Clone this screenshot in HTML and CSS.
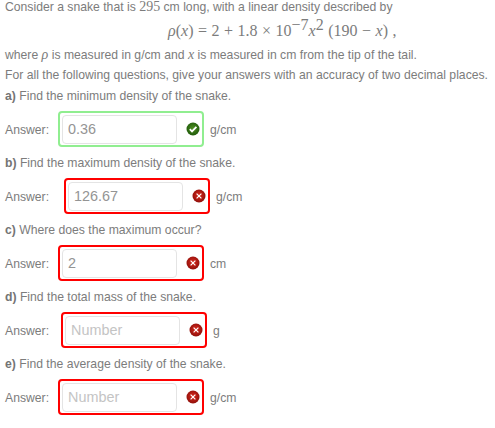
FILE: index.html
```html
<!DOCTYPE html>
<html lang="en">

<head>
    <meta charset="UTF-8">
    <title>Snake density</title>
    <link rel="stylesheet" href="styles.css">
</head>

<body>
    <svg class="defs" width="0" height="0">
        <defs>
            <radialGradient id="greenBall" cx="50%" cy="45%" r="55%">
                <stop offset="0%" stop-color="#4f8f22"></stop>
                <stop offset="100%" stop-color="#1f5a0a"></stop>
            </radialGradient>
            <radialGradient id="redBall" cx="50%" cy="45%" r="55%">
                <stop offset="0%" stop-color="#dc2a1e"></stop>
                <stop offset="100%" stop-color="#8f0f0a"></stop>
            </radialGradient>
        </defs>
    </svg>

    <p class="line">Consider a snake that is <span class="num">295</span> cm long, with a linear density described by</p>
    <div class="formula"><i>ρ</i>(<i>x</i>) = 2 + 1.8 × 10<sup class="big">−7</sup><i>x</i><sup class="big">2</sup> (190 − <i>x</i>) ,</div>
    <p class="line where">where <i class="var">ρ</i> is measured in g/cm and <i class="var">x</i> is measured in cm from the tip of the tail.</p>
    <p class="line all">For all the following questions, give your answers with an accuracy of two decimal places.</p>

    <p class="line question"><b>a)</b> Find the minimum density of the snake.</p>
    <div class="answer">
        <span class="label">Answer:</span>
        <div class="box good">
            <input class="field" value="0.36">
            <svg class="mark" viewBox="0 0 14 14"><circle cx="7" cy="7" r="6.5" fill="url(#greenBall)"></circle><path d="M3.8 7.2 6 9.4 10.4 4.8" fill="none" stroke="#fff" stroke-width="1.8"></path></svg>
        </div>
        <span class="unit">g/cm</span>
    </div>

    <p class="line question"><b>b)</b> Find the maximum density of the snake.</p>
    <div class="answer">
        <span class="label">Answer:</span>
        <div class="box bad shift-6">
            <input class="field" value="126.67">
            <svg class="mark" viewBox="0 0 14 14"><circle cx="7" cy="7" r="6.5" fill="url(#redBall)"></circle><path d="M4.6 4.6 9.4 9.4M9.4 4.6 4.6 9.4" stroke="#fff" stroke-width="1.2"></path></svg>
        </div>
        <span class="unit">g/cm</span>
    </div>

    <p class="line question"><b>c)</b> Where does the maximum occur?</p>
    <div class="answer">
        <span class="label">Answer:</span>
        <div class="box bad">
            <input class="field" value="2">
            <svg class="mark" viewBox="0 0 14 14"><circle cx="7" cy="7" r="6.5" fill="url(#redBall)"></circle><path d="M4.6 4.6 9.4 9.4M9.4 4.6 4.6 9.4" stroke="#fff" stroke-width="1.2"></path></svg>
        </div>
        <span class="unit">cm</span>
    </div>

    <p class="line question"><b>d)</b> Find the total mass of the snake.</p>
    <div class="answer">
        <span class="label">Answer:</span>
        <div class="box bad shift-3">
            <input class="field" placeholder="Number">
            <svg class="mark" viewBox="0 0 14 14"><circle cx="7" cy="7" r="6.5" fill="url(#redBall)"></circle><path d="M4.6 4.6 9.4 9.4M9.4 4.6 4.6 9.4" stroke="#fff" stroke-width="1.2"></path></svg>
        </div>
        <span class="unit">g</span>
    </div>

    <p class="line question"><b>e)</b> Find the average density of the snake.</p>
    <div class="answer">
        <span class="label">Answer:</span>
        <div class="box bad">
            <input class="field" placeholder="Number">
            <svg class="mark" viewBox="0 0 14 14"><circle cx="7" cy="7" r="6.5" fill="url(#redBall)"></circle><path d="M4.6 4.6 9.4 9.4M9.4 4.6 4.6 9.4" stroke="#fff" stroke-width="1.2"></path></svg>
        </div>
        <span class="unit">g/cm</span>
    </div>
</body>

</html>
```
FILE: styles.css
```css
* {
    box-sizing: border-box;
}

body {
    margin: 0;
    padding: 0 5px;
    background-color: #ffffff;
    color: #7c7c7c;
    font-family: "Liberation Sans", Arial, sans-serif;
    font-size: 12.2px;
    line-height: 14px;
}

.defs {
    position: absolute;
}

.line {
    margin: 0;
    white-space: nowrap;
}

.num {
    font-family: "Liberation Serif", serif;
    font-size: 14px;
}

.var {
    font-family: "Liberation Serif", serif;
    font-size: 14px;
}

.formula {
    height: 32px;
    margin-top: 2px;
    padding-left: 163px;
    font-family: "Liberation Serif", serif;
    font-size: 16px;
    line-height: 30px;
    word-spacing: 0.5px;
    white-space: nowrap;
}

.big {
    font-size: 16px;
    line-height: 0;
    vertical-align: 6px;
}

.all {
    margin-top: 6px;
}

.question {
    margin-top: 7px;
}

.question b {
    color: #747474;
}

.answer {
    display: flex;
    align-items: center;
    height: 36px;
    margin: 8px 0 9px;
}

.label {
    width: 53px;
    padding-top: 1px;
}

.box {
    display: flex;
    align-items: center;
    width: 146px;
    height: 36px;
    padding: 0 2px;
    border: 2px solid;
    border-radius: 4px;
}

.good {
    border-color: #90ee90;
}

.bad {
    border-color: #ff0000;
}

.shift-3 {
    margin-left: 3px;
}

.shift-6 {
    margin-left: 6px;
}

.field {
    width: 115px;
    height: 29px;
    padding: 0 5px;
    border: 1px solid #e4e4e4;
    border-radius: 4px;
    background-color: #ffffff;
    color: #949494;
    font-family: "Liberation Sans", Arial, sans-serif;
    font-size: 14.4px;
}

.field::placeholder {
    color: #c4c4c4;
    opacity: 1;
}

.mark {
    width: 14px;
    height: 14px;
    margin-left: 9px;
    flex-shrink: 0;
}

.unit {
    margin-left: 6px;
    padding-top: 1px;
}
```
